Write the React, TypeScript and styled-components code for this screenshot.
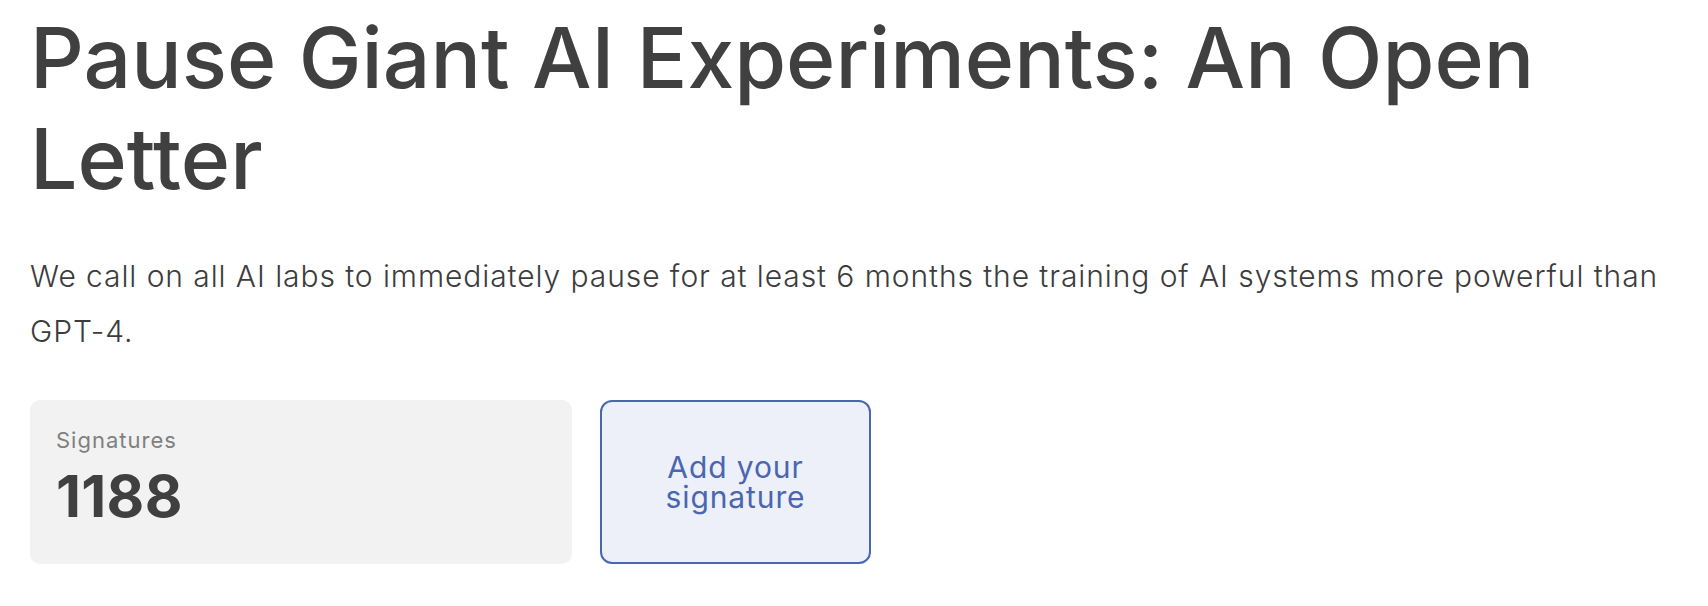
import React from 'react';
import styled, { createGlobalStyle } from 'styled-components';

const GlobalStyle = createGlobalStyle`
  html, body {
    margin: 0;
    padding: 0;
    background: #FFFFFF;
  }
  body {
    font-family: Inter, "Noto Sans", sans-serif;
    color: #404040;
  }
`

const Page = styled.main`
  padding: 8px 30px 0 30px;
`

const Title = styled.h1`
  margin: 0;
  font-size: 84px;
  font-weight: 500;
  line-height: 1.2;
  letter-spacing: 0;
  color: #404040;
`

const Lead = styled.p`
  margin: 39px 0 0 0;
  font-size: 30px;
  font-weight: 300;
  line-height: 55px;
  letter-spacing: 0.92px;
  color: #3C3C3C;
`

const Actions = styled.div`
  display: flex;
  gap: 28px;
  margin-top: 41px;
`

const StatCard = styled.div`
  display: flex;
  flex-direction: column;
  box-sizing: border-box;
  width: 542px;
  height: 164px;
  padding: 26px 27px 0 26px;
  background-color: #F2F2F2;
  border-radius: 10px;
`

const StatLabel = styled.span`
  font-size: 22px;
  line-height: 28px;
  letter-spacing: 1px;
  color: #808080;
`

const StatValue = styled.span`
  margin-top: 7px;
  font-size: 58px;
  font-weight: 700;
  line-height: 70px;
  letter-spacing: 0.3px;
  color: #404040;
`

const SignButton = styled.button`
  box-sizing: border-box;
  width: 271px;
  height: 164px;
  padding: 0 20px;
  background-color: #EDF0F8;
  border: 2px solid #4A66B0;
  border-radius: 12px;
  font-family: Inter, "Noto Sans", sans-serif;
  font-size: 30px;
  line-height: 30px;
  letter-spacing: 0.9px;
  color: #4A66B0;
  cursor: pointer;
`

function App() {
  return (
    <>
      <GlobalStyle />
      <Page>
        <Title>Pause Giant AI Experiments: An Open Letter</Title>
        <Lead>
          We call on all AI labs to immediately pause for at least 6 months the training of AI systems more
          powerful than GPT-4.
        </Lead>
        <Actions>
          <StatCard>
            <StatLabel>Signatures</StatLabel>
            <StatValue>1188</StatValue>
          </StatCard>
          <SignButton>Add your signature</SignButton>
        </Actions>
      </Page>
    </>
  );
}

export default App;
